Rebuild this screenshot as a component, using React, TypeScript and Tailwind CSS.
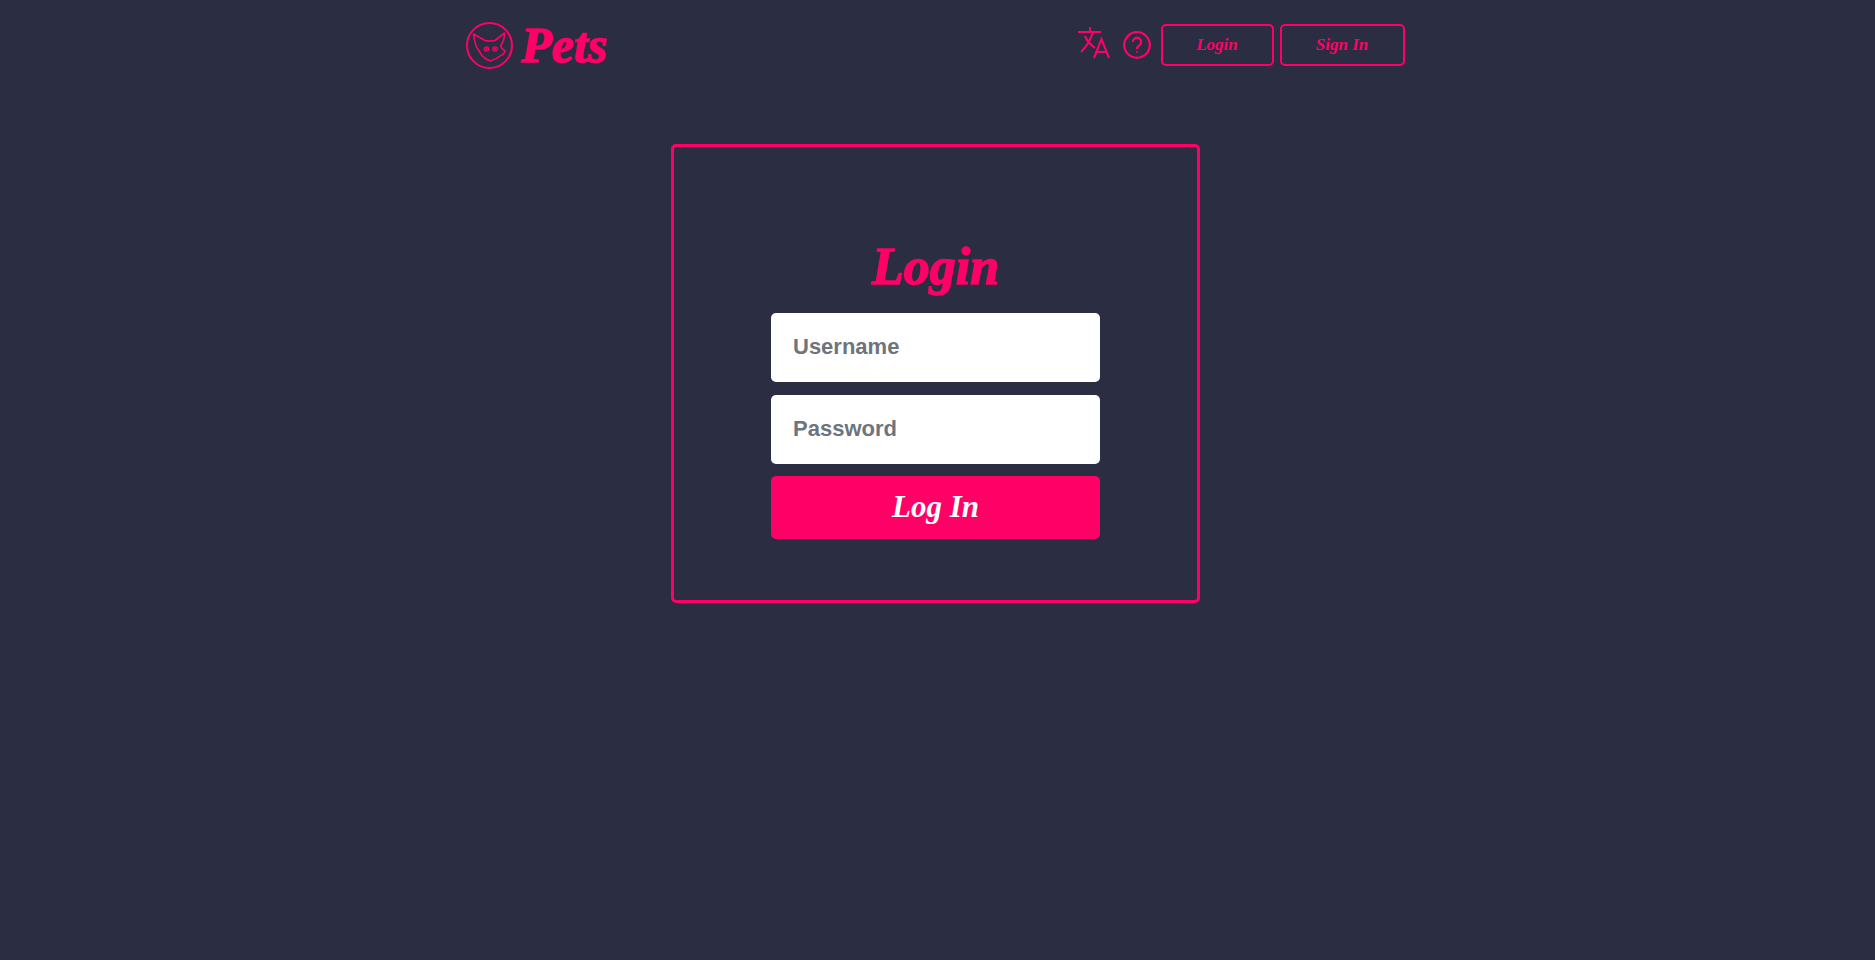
const SCRIPT = "[font-family:'Liberation_Serif',cursive] italic font-bold";
const SANS = "[font-family:'Liberation_Sans',Arial,sans-serif]";

function CatLogo() {
  return (
    <svg width="47" height="47" viewBox="0 0 47 47" fill="none" stroke="#ff0066" className="shrink-0">
      <circle cx="23.5" cy="23.5" r="22.5" strokeWidth="2" />
      <path
        d="M7.5 12 L19 18.5 Q24 19.5 29 18.5 L38.5 11 Q38.5 19 34.5 24 Q35.5 27 39 29 Q38.5 32 35.5 33 Q31 37 24.3 39 Q19.5 37.5 16 33.5 L10.5 25 Q8 18 7.5 12 Z"
        strokeWidth="1.6"
        strokeLinejoin="round"
      />
      <circle cx="20.5" cy="27" r="2.2" strokeWidth="1.2" />
      <circle cx="29" cy="27" r="2.2" strokeWidth="1.2" />
      <circle cx="20.5" cy="27" r="0.7" fill="#ff0066" />
      <circle cx="29" cy="27" r="0.7" fill="#ff0066" />
    </svg>
  );
}

function TranslateIcon() {
  return (
    <svg width="32" height="32" viewBox="0 0 32 32" fill="none" stroke="#ff0066" strokeWidth="2.1" className="shrink-0">
      <path d="M0 5 H23 M12 0 V5 M15 5 C13 12 9 19 3 25 M7 9 C9 14 13 18 17 21" />
      <path d="M16 31 L23.5 12 L31 31 M18.5 25 H28.5" />
    </svg>
  );
}

function HelpIcon() {
  return (
    <svg width="28" height="28" viewBox="0 0 28 28" fill="none" stroke="#ff0066" strokeWidth="2.3" className="shrink-0">
      <circle cx="14" cy="14" r="12.8" />
      <path d="M9.8 11 A4.2 4.2 0 1 1 16.4 14.4 C14.8 15.4 14 16.2 14 18" />
      <circle cx="14" cy="21" r="0.6" fill="#ff0066" strokeWidth="1" />
    </svg>
  );
}

export default function App() {
  return (
    <div className={`${SANS} min-h-[960px] bg-[#2b2d42] pr-[4px]`}>
      <header className="mx-auto flex h-[90px] w-[940px] items-start pt-[22px]">
        <CatLogo />
        <span className={`${SCRIPT} ml-[9px] text-[50px] leading-[46px] text-[#ff0066] [-webkit-text-stroke:1.5px_#ff0066]`}>Pets</span>
        <div className="ml-auto mr-[1px] flex items-start">
          <div className="mt-[5px]">
            <TranslateIcon />
          </div>
          <div className="ml-[13px] mt-[9px]">
            <HelpIcon />
          </div>
          <button className={`${SCRIPT} ml-[10px] mt-[2px] h-[42px] w-[113px] rounded-[5px] border-2 border-[#ff0066] text-[17px] text-[#ff0066]`}>
            Login
          </button>
          <button className={`${SCRIPT} ml-[6px] mt-[2px] h-[42px] w-[125px] rounded-[5px] border-2 border-[#ff0066] text-[17px] text-[#ff0066]`}>
            Sign In
          </button>
        </div>
      </header>
      <main className="mx-auto mt-[54px] flex h-[459px] w-[529px] flex-col items-center rounded-[5px] border-[3px] border-[#ff0066] pt-[87px]">
        <h1 className={`${SCRIPT} h-[79px] text-[52px] leading-[66px] text-[#ff0066] [-webkit-text-stroke:1.5px_#ff0066]`}>Login</h1>
        <div className="flex w-[329px] flex-col gap-[13px]">
          <input
            placeholder="Username"
            className={`${SANS} h-[69px] w-full rounded-[5px] bg-white pb-[2px] pl-[22px] text-[22px] font-bold outline-none placeholder:text-[#6c757d]`}
          />
          <input
            placeholder="Password"
            className={`${SANS} h-[69px] w-full rounded-[5px] bg-white pb-[2px] pl-[22px] text-[22px] font-bold outline-none placeholder:text-[#6c757d]`}
          />
          <button className={`${SCRIPT} -mt-[1px] h-[63px] w-full rounded-[5px] bg-[#ff0066] text-[31px] text-white`}>
            Log In
          </button>
        </div>
      </main>
    </div>
  );
}
